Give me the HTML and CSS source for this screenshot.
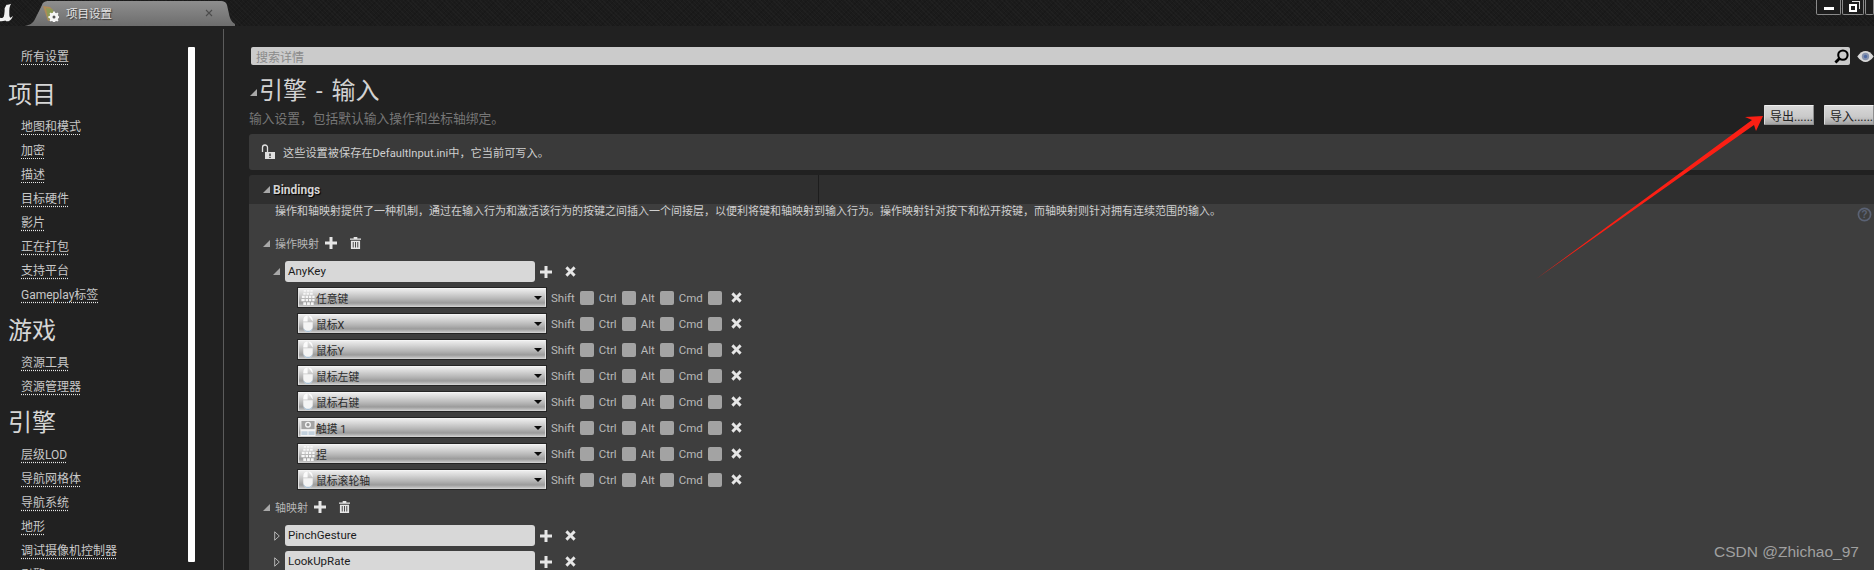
FILE: index.html
```html
<!DOCTYPE html>
<html lang="zh">
<head>
<meta charset="utf-8">
<title>项目设置</title>
<link rel="stylesheet" href="styles.css">
</head>
<body>
<svg class="defs" width="0" height="0" aria-hidden="true">
  <defs>
    <symbol id="i-plus" viewBox="0 0 12 12"><path d="M4.5 0h3v4.5H12v3H7.5V12h-3V7.5H0v-3h4.5z" fill="#e6e6e6"/></symbol>
    <symbol id="i-x" viewBox="0 0 12 12"><path d="M2.6.4 6 3.8 9.4.4l2.2 2.2L8.2 6l3.4 3.4-2.2 2.2L6 8.2l-3.4 3.4-2.2-2.2L3.8 6 .4 2.6z" fill="#e6e6e6"/></symbol>
    <symbol id="i-trash" viewBox="0 0 12 13"><path d="M4 0h4v1.500h4v1.500H0V1.500h4zM1 4h10v9H1zm2 1.500v6h1v-6zm2.500 0v6h1v-6zm2.500 0v6h1v-6z" fill="#e6e6e6" fill-rule="evenodd"/></symbol>
    <symbol id="i-mouse" viewBox="0 0 16 18"><path d="M3 7V5.500C3 2.500 4.800.500 7.600.500V7zM8.400.500c2.800 0 4.600 2 4.600 5V7z" fill="#fbfbfb"/><path d="M3 7.600h10v4.900c0 3.500-2.200 5.500-5 5.500s-5-2-5-5.500z" fill="#f4f4f4"/><path d="M3.300 13.500c.9 2.500 2.900 3.300 4.700 3.300s3.800-.8 4.700-3.300c.2 2.700-1.900 4.500-4.700 4.500s-4.900-1.800-4.700-4.500z" fill="#a9c0d4"/></symbol>
    <symbol id="i-keys" viewBox="0 0 16 18"><path d="M3.500 1h2.500v2H3.500zm3.500 0h2.500v2H7zm3.500 0H13v2h-2.500zM3 4h2.500v2H3zm3.500 0H9v2H6.500zM10 4h3v2h-3zM1.500 7.200h3v2.300h-3zm4 0h2.500v2.300H5.500zm3.500 0h2.500v2.300H9zm3.500 0h2.500v2.300h-2.500zM1 10.500h3.500v2.500H1zm4.500 0H8v2.500H5.500zm3.500 0h2.500v2.500H9zm3.500 0H15v2.500h-2.500zM3 14h3v3H3zm4 0h3v3H7zm4 0h3v3h-3z" fill="#f6f6f6"/></symbol>
    <symbol id="i-touch" viewBox="0 0 16 18"><path d="M0 1h16v17H0z" fill="#f4f4f4"/><path d="M1 2h14v9H1z" fill="#a4a4a4"/><circle cx="8" cy="6" r="3.200" fill="#f4f4f4"/><circle cx="8" cy="6" r="1.700" fill="#999"/><path d="M0 11h16v1H0z" fill="#f4f4f4"/><path d="M1 13h6.500v4H1zm7.500 0H15v4H8.500z" fill="#c2d0dc"/></symbol>
    <symbol id="i-open" viewBox="0 0 6 6"><path d="M6 0v6H0z" fill="#a8a8a8"/></symbol>
    <symbol id="i-closed" viewBox="0 0 6 10"><path d="M.7.800 5.300 5 .7 9.200z" fill="none" stroke="#b5b5b5"/></symbol>
  </defs>
</svg>

<header class="topbar">
  <svg class="logo" viewBox="0 0 14 20" aria-hidden="true"><path d="M7 1c2 0 3 0 5-1-2 3-2 6-2 10 0 2 0 4 1 5 1 0 2-1 3-2-1 3-3 6-6 6-1 0-2 0-2-1-1 0-4 1-6 1v-4c2 1 3 0 4-1 1-3 1-7 1-9z" fill="#f2f2f2"/></svg>
  <div class="tab">
    <svg class="tab-shape" viewBox="0 0 210 26" preserveAspectRatio="none" aria-hidden="true">
      <defs><linearGradient id="tabfill" x1="0" y1="0" x2="0" y2="1"><stop offset="0" stop-color="#8e8e8e"/><stop offset="1" stop-color="#6d6d6d"/></linearGradient></defs>
      <path d="M0 26c5-1 8-3 10-7L17 5c1-3 3-4 7-4h172c3 0 5 1 6 4l2 9c1 5 3 10 11 12z" fill="url(#tabfill)"/>
    </svg>
    <svg class="tab-icon" viewBox="0 0 16 16" aria-hidden="true">
      <path d="M0 0l7 1 3 3-2 10-3 1z" fill="#b08a58"/><path d="M3 2l6 1 4 6-5 5-3-1z" fill="#8d9a55"/>
      <path d="M10.200 5.500h1.600l.3 1.300 1.200.5 1.100-.7 1.100 1.100-.7 1.100.5 1.200 1.300.3v1.600l-1.300.3-.5 1.200.7 1.100-1.100 1.100-1.100-.7-1.200.5-.3.900h-1.600l-.3-.9-1.200-.5-1.100.7-1.100-1.100.7-1.100-.5-1.200-1.300-.3v-1.600l1.300-.3.500-1.200-.7-1.100 1.100-1.100 1.100.7 1.200-.5z" fill="#f6f6f6"/><circle cx="11" cy="11" r="1.500" fill="#555"/>
    </svg>
    <span class="tab-label">项目设置</span>
    <svg class="tab-close" viewBox="0 0 8 8" aria-hidden="true"><path d="M1 1l6 6M7 1 1 7" stroke="#4c4c4c" stroke-width="1.100"/></svg>
  </div>
  <div class="winctl">
    <span class="winbtn"><i class="min"></i></span>
    <span class="winbtn wide"><i class="restore"></i></span>
    <span class="winbtn narrow"></span>
  </div>
</header>

<div class="page">
  <nav class="sidebar">
    <div class="navlist">
      <a class="navitem first">所有设置</a>
      <h2 class="navhead">项目</h2>
      <a class="navitem">地图和模式</a>
      <a class="navitem">加密</a>
      <a class="navitem">描述</a>
      <a class="navitem">目标硬件</a>
      <a class="navitem">影片</a>
      <a class="navitem">正在打包</a>
      <a class="navitem">支持平台</a>
      <a class="navitem">Gameplay标签</a>
      <h2 class="navhead">游戏</h2>
      <a class="navitem">资源工具</a>
      <a class="navitem">资源管理器</a>
      <h2 class="navhead">引擎</h2>
      <a class="navitem">层级LOD</a>
      <a class="navitem">导航网格体</a>
      <a class="navitem">导航系统</a>
      <a class="navitem">地形</a>
      <a class="navitem">调试摄像机控制器</a>
      <a class="navitem">引擎</a>
    </div>
    <div class="scrollthumb"></div>
  </nav>

  <main class="main">
    <div class="searchrow">
      <div class="search">
        <span class="search-ph">搜索详情</span>
        <svg class="search-ico" viewBox="0 0 16 16" aria-hidden="true"><circle cx="9.500" cy="6.500" r="5" fill="none" stroke="#000" stroke-width="2.200"/><path d="M5.800 10.200 1.500 14.500" stroke="#000" stroke-width="3"/></svg>
      </div>
      <svg class="eye" viewBox="0 0 18 12" aria-hidden="true"><path d="M0 6c3-4 6-6 9-6s6 2 9 6c-3 4-6 6-9 6S3 10 0 6z" fill="#d8d8d8"/><circle cx="9" cy="6" r="4" fill="#8592ad"/><circle cx="9" cy="6" r="1.800" fill="#4e6aa5"/></svg>
    </div>

    <div class="titlerow">
      <svg class="tw-open title-tw"><use href="#i-open"/></svg>
      <h1 class="title">引擎 - 输入</h1>
    </div>

    <div class="descrow">
      <p class="desc">输入设置，包括默认输入操作和坐标轴绑定。</p>
      <div class="actions">
        <button class="btn">导出......</button>
        <button class="btn">导入......</button>
      </div>
    </div>

    <div class="notice">
      <svg class="lock" viewBox="0 0 14 16" aria-hidden="true"><path d="M1.500 8V3.500a2.500 2.500 0 0 1 5 0V8" fill="none" stroke="#e0e0e0" stroke-width="1.300"/><path d="M4 8h10v7H4z" fill="#e0e0e0"/><path d="M8.300 9.500h1.400v2.500H8.300zm0 3.200h1.400V14H8.300z" fill="#333"/></svg>
      <span>这些设置被保存在DefaultInput.ini中，它当前可写入。</span>
    </div>

    <section class="panel">
      <div class="panel-head">
        <svg class="tw-open"><use href="#i-open"/></svg>
        <span class="panel-title">Bindings</span>
        <span class="panel-sep"></span>
      </div>
      <div class="panel-body">
        <p class="help">操作和轴映射提供了一种机制，通过在输入行为和激活该行为的按键之间插入一个间接层，以便利将键和轴映射到输入行为。操作映射针对按下和松开按键，而轴映射则针对拥有连续范围的输入。</p>
        <svg class="helpicon" viewBox="0 0 16 16" aria-hidden="true"><circle cx="8" cy="8" r="6.500" fill="none" stroke="#5a6274" stroke-width="1.800"/><text x="8" y="12" class="helpq">?</text></svg>

        <div class="grouphead">
          <svg class="tw-open"><use href="#i-open"/></svg>
          <span class="grouplabel">操作映射</span>
          <svg class="ico-plus"><use href="#i-plus"/></svg>
          <svg class="ico-trash"><use href="#i-trash"/></svg>
        </div>

        <div class="mapname first-map">
          <svg class="tw-open"><use href="#i-open"/></svg>
          <div class="nameinput">AnyKey</div>
          <svg class="ico-plus"><use href="#i-plus"/></svg>
          <svg class="ico-x"><use href="#i-x"/></svg>
        </div>

        <div class="keyrow"><div class="combo"><svg class="keyicon"><use href="#i-keys"/></svg><span>任意键</span><i class="caret"></i></div><span class="mod">Shift</span><i class="cb"></i><span class="mod">Ctrl</span><i class="cb"></i><span class="mod">Alt</span><i class="cb"></i><span class="mod">Cmd</span><i class="cb"></i><svg class="ico-x rowx"><use href="#i-x"/></svg></div>
        <div class="keyrow"><div class="combo"><svg class="keyicon"><use href="#i-mouse"/></svg><span>鼠标X</span><i class="caret"></i></div><span class="mod">Shift</span><i class="cb"></i><span class="mod">Ctrl</span><i class="cb"></i><span class="mod">Alt</span><i class="cb"></i><span class="mod">Cmd</span><i class="cb"></i><svg class="ico-x rowx"><use href="#i-x"/></svg></div>
        <div class="keyrow"><div class="combo"><svg class="keyicon"><use href="#i-mouse"/></svg><span>鼠标Y</span><i class="caret"></i></div><span class="mod">Shift</span><i class="cb"></i><span class="mod">Ctrl</span><i class="cb"></i><span class="mod">Alt</span><i class="cb"></i><span class="mod">Cmd</span><i class="cb"></i><svg class="ico-x rowx"><use href="#i-x"/></svg></div>
        <div class="keyrow"><div class="combo"><svg class="keyicon"><use href="#i-mouse"/></svg><span>鼠标左键</span><i class="caret"></i></div><span class="mod">Shift</span><i class="cb"></i><span class="mod">Ctrl</span><i class="cb"></i><span class="mod">Alt</span><i class="cb"></i><span class="mod">Cmd</span><i class="cb"></i><svg class="ico-x rowx"><use href="#i-x"/></svg></div>
        <div class="keyrow"><div class="combo"><svg class="keyicon"><use href="#i-mouse"/></svg><span>鼠标右键</span><i class="caret"></i></div><span class="mod">Shift</span><i class="cb"></i><span class="mod">Ctrl</span><i class="cb"></i><span class="mod">Alt</span><i class="cb"></i><span class="mod">Cmd</span><i class="cb"></i><svg class="ico-x rowx"><use href="#i-x"/></svg></div>
        <div class="keyrow"><div class="combo"><svg class="keyicon"><use href="#i-touch"/></svg><span>触摸 1</span><i class="caret"></i></div><span class="mod">Shift</span><i class="cb"></i><span class="mod">Ctrl</span><i class="cb"></i><span class="mod">Alt</span><i class="cb"></i><span class="mod">Cmd</span><i class="cb"></i><svg class="ico-x rowx"><use href="#i-x"/></svg></div>
        <div class="keyrow"><div class="combo"><svg class="keyicon"><use href="#i-keys"/></svg><span>捏</span><i class="caret"></i></div><span class="mod">Shift</span><i class="cb"></i><span class="mod">Ctrl</span><i class="cb"></i><span class="mod">Alt</span><i class="cb"></i><span class="mod">Cmd</span><i class="cb"></i><svg class="ico-x rowx"><use href="#i-x"/></svg></div>
        <div class="keyrow"><div class="combo"><svg class="keyicon"><use href="#i-mouse"/></svg><span>鼠标滚轮轴</span><i class="caret"></i></div><span class="mod">Shift</span><i class="cb"></i><span class="mod">Ctrl</span><i class="cb"></i><span class="mod">Alt</span><i class="cb"></i><span class="mod">Cmd</span><i class="cb"></i><svg class="ico-x rowx"><use href="#i-x"/></svg></div>

        <div class="grouphead axis">
          <svg class="tw-open"><use href="#i-open"/></svg>
          <span class="grouplabel">轴映射</span>
          <svg class="ico-plus"><use href="#i-plus"/></svg>
          <svg class="ico-trash"><use href="#i-trash"/></svg>
        </div>

        <div class="mapname axis-first">
          <svg class="tw-closed"><use href="#i-closed"/></svg>
          <div class="nameinput">PinchGesture</div>
          <svg class="ico-plus"><use href="#i-plus"/></svg>
          <svg class="ico-x"><use href="#i-x"/></svg>
        </div>
        <div class="mapname next">
          <svg class="tw-closed"><use href="#i-closed"/></svg>
          <div class="nameinput">LookUpRate</div>
          <svg class="ico-plus"><use href="#i-plus"/></svg>
          <svg class="ico-x"><use href="#i-x"/></svg>
        </div>
      </div>
    </section>
  </main>
</div>

<svg class="arrow" viewBox="0 0 240 180" aria-hidden="true"><path d="M1 169 217 10 210 7 228 6 221 21 219 15z" fill="#fb1f14"/></svg>
<div class="watermark">CSDN @Zhichao_97</div>
</body>
</html>
```
FILE: styles.css
```css
* { box-sizing: border-box; }
html, body { margin: 0; padding: 0; height: 100%; overflow: hidden; }
body {
  width: 1874px;
  height: 570px;
  background: #212121;
  color: #c8c8c8;
  font-family: Roboto, "Noto Sans CJK SC", sans-serif;
  font-size: 12px;
  position: relative;
}
.defs { position: absolute; }

.topbar {
  height: 26px;
  background-color: #1b1b1b;
  background-image:
    repeating-linear-gradient(45deg, rgba(255,255,255,.025) 0 1px, transparent 1px 3px),
    repeating-linear-gradient(-45deg, rgba(0,0,0,.12) 0 1px, transparent 1px 4px);
  display: flex;
  position: relative;
}
.logo { position: absolute; left: 0; top: 3px; width: 13px; height: 20px; }
.tab {
  position: absolute;
  left: 25px;
  top: 0;
  width: 210px;
  height: 26px;
  display: flex;
  align-items: center;
  padding-left: 18px;
}
.tab-shape { position: absolute; inset: 0; width: 100%; height: 100%; }
.tab-icon { position: relative; width: 16px; height: 16px; margin-top: 2px; flex: none; }
.tab-label { position: relative; margin-left: 7px; font-size: 11.500px; color: #e4e4e4; text-shadow: 1px 1px 1px #333; }
.tab-close { position: relative; width: 8px; height: 8px; margin-left: 93px; }

.winctl { position: absolute; right: 0; top: 0; display: flex; gap: 1px; }
.winbtn {
  width: 25px;
  height: 15px;
  background: #1c1c1c;
  border: 1px solid #8a8a8a;
  border-top: 0;
  border-radius: 0 0 2px 2px;
  display: flex;
  align-items: center;
  justify-content: center;
}
.winbtn.wide { width: 22px; }
.winbtn.narrow { width: 9px; }
.min { width: 10px; height: 3px; background: #fff; margin-top: 2px; }
.restore { width: 8px; height: 8px; border: 2px solid #fff; margin-top: 2px; box-shadow: 2px -2px 0 0 #1c1c1c, 3px -3px 0 0 #ddd; }

.page { display: flex; height: 544px; overflow: hidden; }

.sidebar {
  width: 224px;
  flex: none;
  margin-top: 3px;
  border-right: 1px solid #5c5c5c;
  position: relative;
  overflow: hidden;
}
.navlist { display: flex; flex-direction: column; padding-top: 19px; align-items: flex-start; }
.navitem {
  margin-left: 21px;
  height: 24px;
  line-height: 18px;
  font-size: 12px;
  color: #c8c8c8;
  flex: none;
  text-decoration: underline dotted #e8e8e8;
  text-underline-offset: 3px;
}
.navhead {
  margin: 0 0 0 8px;
  height: 44px;
  line-height: 42px;
  font-size: 24px;
  font-weight: 400;
  color: #d6d6d6;
  flex: none;
}
.navitem.first { margin-bottom: 2px; }
.scrollthumb {
  position: absolute;
  left: 188px;
  top: 18px;
  width: 7px;
  height: 515px;
  background: #fff;
  border-radius: 1px;
}

.main { flex: 1; min-width: 0; margin-left: 25px; display: flex; flex-direction: column; }

.searchrow { display: flex; align-items: center; margin-top: 21px; padding-left: 2px; height: 18px; flex: none; }
.search {
  width: 1600px;
  height: 18px;
  background: #cbcbcb;
  border-radius: 2px;
  display: flex;
  align-items: center;
  justify-content: space-between;
  padding: 0 1px 0 5px;
}
.search-ph { font-size: 12px; color: #8a8a8a; }
.search-ico { width: 15px; height: 15px; }
.eye { width: 17px; height: 11px; margin-left: 7px; flex: none; }

.titlerow { display: flex; align-items: flex-end; margin-top: 10px; height: 32px; flex: none; }
.title-tw { margin-left: 1px; margin-bottom: 11px; width: 7px; height: 7px; }
.title { margin: 0 0 0 2px; font-size: 24px; line-height: 32px; font-weight: 400; word-spacing: 3px; color: #d2d2d2; white-space: nowrap; }

.descrow { display: flex; justify-content: space-between; height: 27px; flex: none; }
.desc { margin: 3px 0 0; font-size: 12.750px; line-height: 18px; color: #767676; }
.actions { display: flex; gap: 10px; }
.btn {
  width: 50px;
  height: 20px;
  margin-top: -2px;
  padding: 0 0 0 5px;
  border: 1px solid #8e8e8e;
  border-top-color: #efefef;
  border-left-color: #dcdcdc;
  border-radius: 1px;
  background: linear-gradient(#d8d8d8, #c9c9c9 60%, #a4a4a4);
  color: #222;
  font: 12px Roboto, "Noto Sans CJK SC", sans-serif;
  text-align: left;
  white-space: nowrap;
  overflow: hidden;
}

.notice {
  height: 36px;
  flex: none;
  background: #3a3a3a;
  border-radius: 3px 0 0 3px;
  display: flex;
  align-items: center;
  padding-left: 12px;
  color: #cfcfcf;
  font-size: 11.200px;
}
.lock { width: 14px; height: 16px; margin-right: 8px; flex: none; }

.panel { margin-top: 5px; flex: 1; display: flex; flex-direction: column; min-height: 0; }
.panel-head {
  height: 29px;
  flex: none;
  background: #2f2f2f;
  border-radius: 3px 0 0 0;
  display: flex;
  align-items: center;
  padding-left: 14px;
  position: relative;
}
.panel-title { font-size: 12px; font-weight: 700; color: #d4d4d4; margin-left: 3px; text-shadow: 1px 1px 1px #000; }
.panel-sep { position: absolute; left: 569px; top: 0; bottom: 0; width: 1px; background: #1d1d1d; }

.panel-body { flex: 1; background: #3e3e3e; position: relative; overflow: hidden; }
.help { margin: 0; position: absolute; left: 26px; top: -1px; white-space: nowrap; font-size: 11px; line-height: 18px; color: #cfcfcf; }
.helpicon { position: absolute; right: 2px; top: 3px; width: 15px; height: 15px; }
.helpq { font: 700 11px "Liberation Sans", sans-serif; fill: #5a6274; text-anchor: middle; }

.tw-open { width: 7px; height: 7px; flex: none; }
.tw-closed { width: 6px; height: 10px; flex: none; }
.ico-plus { width: 12px; height: 12px; flex: none; }
.ico-x { width: 11px; height: 11px; flex: none; }
.ico-trash { width: 11px; height: 12px; flex: none; }

.grouphead { display: flex; align-items: center; height: 18px; margin-left: 14px; margin-top: 30px; }
.grouplabel { margin-left: 5px; font-size: 11px; color: #b6b6b6; }
.grouphead .ico-plus { margin-left: 6px; }
.grouphead .ico-trash { margin-left: 13px; }
.grouphead.axis { margin-top: 9px; }

.mapname { display: flex; align-items: center; height: 21px; margin-left: 24px; }
.first-map { margin-top: 9px; }
.axis-first { margin-top: 9px; }
.next { margin-top: 5px; }
.mapname .tw-closed { margin-left: 1px; }
.mapname .tw-open { margin-right: -1px; }
.nameinput {
  width: 250px;
  height: 21px;
  margin-left: 5px;
  background: #d8d8d8;
  border-radius: 3px;
  padding-left: 3px;
  line-height: 20px;
  color: #1c1c1c;
  font-size: 11.500px;
}
.mapname .tw-open + .nameinput { margin-left: 6px; }
.mapname .ico-plus { margin-left: 5px; }
.mapname .ico-x { margin-left: 13px; }

.keyrow { display: flex; align-items: center; height: 19px; margin-left: 49px; margin-top: 7px; }
.first-map + .keyrow { margin-top: 6px; }
.combo {
  width: 248px;
  height: 19px;
  flex: none;
  display: flex;
  align-items: center;
  border: 1px solid #e2e2e2;
  border-top-color: #f4f4f4;
  border-bottom-color: #cfcfcf;
  outline: 1px solid #242424;
  background: linear-gradient(#ececec, #d6d6d6 25%, #b4b4b4 60%, #9b9b9b 82%, #c4c4c4);
  color: #2a2a2a;
  font-size: 10.800px;
  position: relative;
  padding-left: 1px;
}
.keyicon { width: 16px; height: 17px; flex: none; }
.caret {
  position: absolute;
  right: 3px;
  top: 7px;
  width: 0;
  height: 0;
  border-left: 4px solid transparent;
  border-right: 4px solid transparent;
  border-top: 4px solid #0c0c0c;
}
.mod { font-size: 11.500px; color: #b9b9b9; margin-left: 5px; flex: none; white-space: nowrap; }
.cb { width: 14px; height: 14px; background: #a3a3a3; border-radius: 2px; flex: none; margin-left: 5px; }
.rowx { margin-left: 9px; }

.arrow { position: absolute; left: 1535px; top: 110px; width: 240px; height: 180px; }
.watermark {
  position: absolute;
  left: 1714px;
  top: 543px;
  font: 15.500px/18px "Liberation Sans", Arial, sans-serif;
  color: #a0a0a0;
  white-space: nowrap;
}
```
